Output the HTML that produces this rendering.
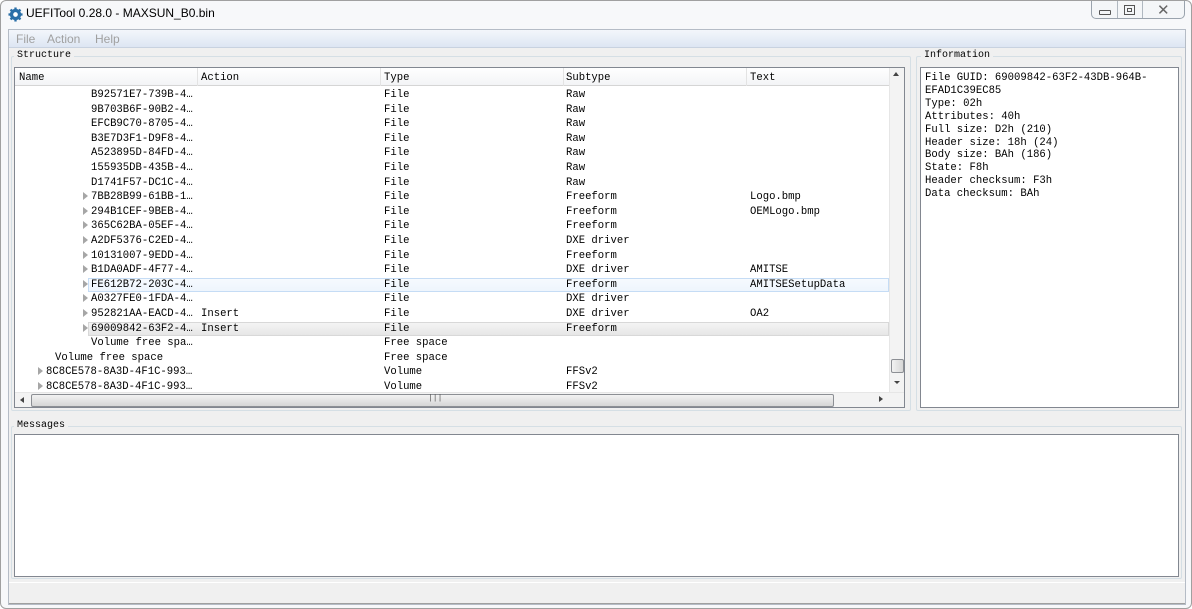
<!DOCTYPE html>
<html><head><meta charset="utf-8"><style>
*{margin:0;padding:0;box-sizing:border-box}
body{width:1192px;height:609px;background:#fff;position:relative;overflow:hidden;font-family:"Liberation Mono",monospace;font-size:10.6px;color:#000}
.a{position:absolute}
.frame{left:0;top:0;width:1192px;height:609px;border:1px solid #a0a0a0;border-radius:6px;background:#f7f8fa}
.title{left:26px;top:6px;font-family:"Liberation Sans",sans-serif;font-size:12px;color:#000}
.client{left:8px;top:29px;width:1178px;height:576px;background:#f0f0f0;border:1px solid #b5bcc6}
.menu{left:9px;top:30px;width:1176px;height:18px;background:linear-gradient(#f3f6fb,#dde6f3);border-bottom:1px solid #c8d2e0;font-family:"Liberation Sans",sans-serif;font-size:12px;color:#a0a0a0}
.box{background:#fff;border:1px solid #828790}
.t{position:absolute;white-space:pre}
.grp{border:1px solid #d5dfe5;border-radius:2px}
.lbl{background:#f0f0f0;padding:0 3px;font-size:10px}
.arr{position:absolute;width:0;height:0;border-left:5px solid #a6a6a6;border-top:4px solid transparent;border-bottom:4px solid transparent}
</style></head><body>
<div class="a frame"></div>
<svg class="a" style="left:8px;top:7px" width="15" height="15" viewBox="0 0 16 16"><circle cx="8" cy="8" r="6" fill="#2a6fa8"/><g stroke="#2a6fa8" stroke-width="2.5"><line x1="8" y1="0.5" x2="8" y2="15.5"/><line x1="0.5" y1="8" x2="15.5" y2="8"/><line x1="2.7" y1="2.7" x2="13.3" y2="13.3"/><line x1="13.3" y1="2.7" x2="2.7" y2="13.3"/></g><circle cx="8" cy="8" r="2.5" fill="#fff"/></svg>
<div class="a title">UEFITool 0.28.0 - MAXSUN_B0.bin</div>
<div class="a" style="left:1091px;top:1px;width:94px;height:18px;border:1px solid #9aa3ad;border-top:none;border-radius:0 0 5px 5px;background:#f4f6f8"></div>
<div class="a" style="left:1117px;top:1px;width:1px;height:17px;background:#b0b8c0"></div>
<div class="a" style="left:1142px;top:1px;width:1px;height:17px;background:#b0b8c0"></div>
<div class="a" style="left:1099px;top:10px;width:12px;height:5px;border:1px solid #555;border-radius:1px"></div>
<div class="a" style="left:1124px;top:5px;width:11px;height:10px;border:1px solid #555"></div>
<div class="a" style="left:1127px;top:8px;width:5px;height:4px;border:1px solid #555"></div>
<div class="a" style="left:1157px;top:1px;font-family:'Liberation Sans';font-size:15px;color:#666">✕</div>
<div class="a client"></div>
<div class="a menu"><span class="t" style="left:7px;top:2px">File</span><span class="t" style="left:38px;top:2px">Action</span><span class="t" style="left:86px;top:2px">Help</span></div>

<div class="a grp" style="left:11px;top:56px;width:900px;height:355px"></div>
<div class="a lbl" style="left:14px;top:50px">Structure</div>
<div class="a grp" style="left:916px;top:56px;width:266px;height:355px"></div>
<div class="a lbl" style="left:921px;top:50px">Information</div>
<div class="a grp" style="left:11px;top:426px;width:1171px;height:153px"></div>
<div class="a lbl" style="left:14px;top:420px">Messages</div>

<div class="a box" style="left:14px;top:67px;width:891px;height:341px;overflow:hidden">
 <div class="a" style="left:0;top:0;width:874px;height:18px;background:linear-gradient(#fff,#f3f4f6);border-bottom:1px solid #d5d5d5"></div>
 <div class="a" style="left:182px;top:0;width:1px;height:18px;background:#e3e3e3"></div>
 <div class="a" style="left:365px;top:0;width:1px;height:18px;background:#e3e3e3"></div>
 <div class="a" style="left:548px;top:0;width:1px;height:18px;background:#e3e3e3"></div>
 <div class="a" style="left:731px;top:0;width:1px;height:18px;background:#e3e3e3"></div>
 <span class="t" style="left:4px;top:4px">Name</span><span class="t" style="left:186px;top:4px">Action</span><span class="t" style="left:369px;top:4px">Type</span><span class="t" style="left:551px;top:4px">Subtype</span><span class="t" style="left:735px;top:4px">Text</span>
 <div class="a" style="left:73px;top:210px;width:801px;height:14px;border:1px solid #c5dcf5;background:linear-gradient(#f6fafe,#eef5fd)"></div>
 <div class="a" style="left:73px;top:254px;width:801px;height:14px;border:1px solid #d8d8d8;background:linear-gradient(#f4f4f4,#e6e6e6)"></div>
 <div id="rows"></div>
 <div class="a" style="left:874px;top:0;width:16px;height:324px;background:#f3f3f3;border-left:1px solid #e6e6e6"></div>
 <div class="a" style="left:878px;top:4px;border-bottom:4px solid #444;border-left:3px solid transparent;border-right:3px solid transparent"></div>
 <div class="a" style="left:876px;top:291px;width:13px;height:14px;border:1px solid #8c8f94;border-radius:2px;background:linear-gradient(90deg,#f2f2f2,#d6d6d6)"></div>
 <div class="a" style="left:879px;top:313px;border-top:3px solid #444;border-left:3px solid transparent;border-right:3px solid transparent"></div>
 <div class="a" style="left:0;top:324px;width:890px;height:16px;background:#f3f3f3;border-top:1px solid #e6e6e6"></div>
 <div class="a" style="left:5px;top:329px;border-right:4px solid #444;border-top:3px solid transparent;border-bottom:3px solid transparent"></div>
 <div class="a" style="left:16px;top:326px;width:803px;height:13px;border:1px solid #8c8f94;border-radius:2px;background:linear-gradient(#f2f2f2,#d6d6d6)"></div>
 <span class="t" style="left:413px;top:326px;font-size:8px;color:#555">|||</span>
 <div class="a" style="left:864px;top:328px;border-left:4px solid #444;border-top:3px solid transparent;border-bottom:3px solid transparent"></div>
</div>

<div class="a box" style="left:920px;top:67px;width:259px;height:341px;line-height:12.9px;padding:4px 0 0 4px;white-space:pre">File GUID: 69009842-63F2-43DB-964B-
EFAD1C39EC85
Type: 02h
Attributes: 40h
Full size: D2h (210)
Header size: 18h (24)
Body size: BAh (186)
State: F8h
Header checksum: F3h
Data checksum: BAh</div>

<div class="a box" style="left:14px;top:434px;width:1165px;height:143px"></div>
<div class="a" style="left:9px;top:582px;width:1176px;height:1px;background:#fff"></div>
<div class="a" style="left:9px;top:603px;width:1176px;height:1px;background:#a0a0a0"></div>

<script>
var R=[
[76,0,"B92571E7-739B-4…","","File","Raw",""],
[76,0,"9B703B6F-90B2-4…","","File","Raw",""],
[76,0,"EFCB9C70-8705-4…","","File","Raw",""],
[76,0,"B3E7D3F1-D9F8-4…","","File","Raw",""],
[76,0,"A523895D-84FD-4…","","File","Raw",""],
[76,0,"155935DB-435B-4…","","File","Raw",""],
[76,0,"D1741F57-DC1C-4…","","File","Raw",""],
[76,1,"7BB28B99-61BB-1…","","File","Freeform","Logo.bmp"],
[76,1,"294B1CEF-9BEB-4…","","File","Freeform","OEMLogo.bmp"],
[76,1,"365C62BA-05EF-4…","","File","Freeform",""],
[76,1,"A2DF5376-C2ED-4…","","File","DXE driver",""],
[76,1,"10131007-9EDD-4…","","File","Freeform",""],
[76,1,"B1DA0ADF-4F77-4…","","File","DXE driver","AMITSE"],
[76,1,"FE612B72-203C-4…","","File","Freeform","AMITSESetupData"],
[76,1,"A0327FE0-1FDA-4…","","File","DXE driver",""],
[76,1,"952821AA-EACD-4…","Insert","File","DXE driver","OA2"],
[76,1,"69009842-63F2-4…","Insert","File","Freeform",""],
[76,0,"Volume free spa…","","Free space","",""],
[40,0,"Volume free space","","Free space","",""],
[31,1,"8C8CE578-8A3D-4F1C-993…","","Volume","FFSv2",""],
[31,1,"8C8CE578-8A3D-4F1C-993…","","Volume","FFSv2",""]];
var h="";
R.forEach(function(r,i){var y=21+i*14.6;
if(r[1])h+='<div class="arr" style="left:'+(r[0]-8)+'px;top:'+(y+1)+'px"></div>';
h+='<span class="t" style="left:'+r[0]+'px;top:'+y+'px">'+r[2]+'</span><span class="t" style="left:186px;top:'+y+'px">'+r[3]+'</span><span class="t" style="left:369px;top:'+y+'px">'+r[4]+'</span><span class="t" style="left:551px;top:'+y+'px">'+r[5]+'</span><span class="t" style="left:735px;top:'+y+'px">'+r[6]+'</span>';});
document.getElementById("rows").innerHTML=h;
</script>
</body></html>
